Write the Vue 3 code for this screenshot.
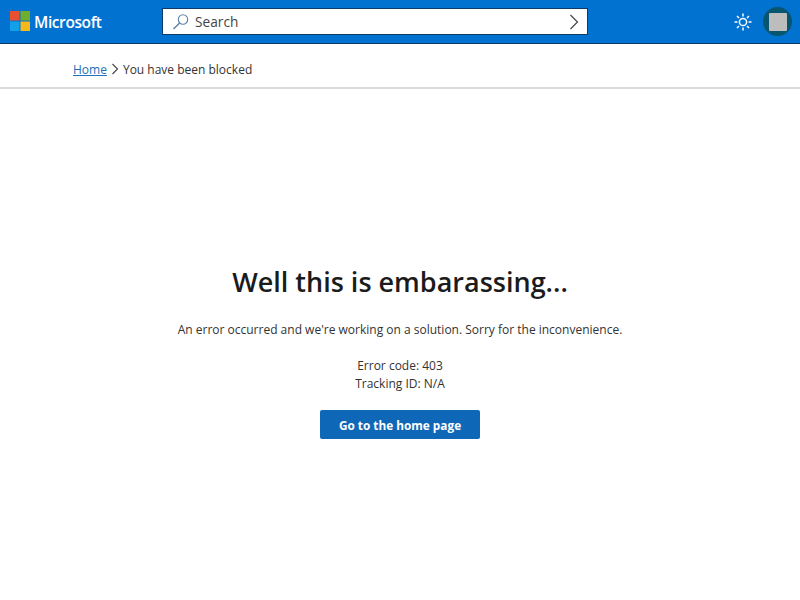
<script setup>
</script>

<template>
  <div class="page">
    <header class="topbar">
      <div class="brand">
        <svg class="logo" width="20" height="20" viewBox="0 0 20 20">
          <rect x="0" y="0" width="9.5" height="9.5" fill="#e8502f" />
          <rect x="10.5" y="0" width="9.5" height="9.5" fill="#6fae2c" />
          <rect x="0" y="10.5" width="9.5" height="9.5" fill="#12a0e8" />
          <rect x="10.5" y="10.5" width="9.5" height="9.5" fill="#f6b81a" />
        </svg>
        <span class="brand-name">Microsoft</span>
      </div>
      <div class="search">
        <svg class="search-icon" width="18" height="18" viewBox="0 0 18 18" fill="none" stroke="#5b7fa3" stroke-width="1.1">
          <circle cx="11" cy="6.5" r="4.7" />
          <path d="M7.6 9.9 L1.5 16" stroke-width="1.4" />
        </svg>
        <span class="search-text">Search</span>
        <svg class="go" width="12" height="16" viewBox="0 0 12 16" fill="none" stroke="#444" stroke-width="1.2">
          <path d="M2.5 1 L9.5 8 L2.5 15" />
        </svg>
      </div>
      <svg class="sun" width="18" height="18" viewBox="0 0 18 18" fill="none" stroke="#fff" stroke-width="1.5">
        <circle cx="9" cy="9" r="3.6" />
        <path d="M9 0.5V3.4M9 14.6V17.5M0.5 9H3.4M14.6 9H17.5M3 3L5 5M13 13L15 15M15 3L13 5M5 13L3 15" />
      </svg>
      <div class="avatar"><div class="avatar-img"></div></div>
    </header>
    <nav class="crumbs">
      <a class="home">Home</a>
      <svg class="sep" width="8" height="12" viewBox="0 0 8 12" fill="none" stroke="#444" stroke-width="1.1">
        <path d="M1.5 1 L6.5 6 L1.5 11" />
      </svg>
      <span>You have been blocked</span>
    </nav>
    <main class="content">
      <h1>Well this is embarassing...</h1>
      <p class="msg">An error occurred and we're working on a solution. Sorry for the inconvenience.</p>
      <p class="code">Error code: 403<br />Tracking ID: N/A</p>
      <button class="cta">Go to the home page</button>
    </main>
  </div>
</template>

<style>
html, body { margin: 0; background: #fff; }
</style>

<style scoped>
.page {
  width: 800px;
  height: 600px;
  overflow: hidden;
  font-family: "Open Sans", "Noto Sans", sans-serif;
  color: #2b2b2b;
}
.topbar {
  height: 43px;
  background: #0272d1;
  border-bottom: 1px solid #0d3a66;
  display: flex;
  align-items: center;
  padding-left: 10px;
  padding-right: 8px;
}
.brand { display: flex; align-items: center; width: 152px; }
.logo { flex: none; margin-top: -1px; }
.brand-name {
  margin-left: 4px;
  color: #fff;
  font-size: 15.5px;
  font-weight: 600;
  letter-spacing: -0.4px;
}
.search {
  width: 426px;
  height: 27px;
  box-sizing: border-box;
  background: #fff;
  border: 1px solid #0d3a66;
  display: flex;
  align-items: center;
  padding-left: 9px;
  padding-right: 7px;
}
.search-text { margin-left: 5px; font-size: 13.7px; color: #444; flex: 1; }
.sun { margin-left: auto; margin-right: 11px; }
.avatar {
  width: 29px;
  height: 29px;
  border-radius: 50%;
  background: #07566f;
  display: flex;
  align-items: center;
  justify-content: center;
}
.avatar-img { width: 18px; height: 18px; background: #bdbdbd; border-radius: 1px; }
.crumbs {
  height: 36px;
  padding-top: 7px;
  border-bottom: 2px solid #dcdcdc;
  display: flex;
  align-items: center;
  padding-left: 73px;
  font-size: 12px;
  color: #333;
}
.home { color: #2270b8; text-decoration: underline; }
.sep { margin: 0 4px 0 4px; }
.content {
  display: flex;
  flex-direction: column;
  align-items: center;
  text-align: center;
  padding-top: 173px;
}
h1 {
  margin: 0;
  font-size: 27px;
  line-height: 40px;
  font-weight: 600;
  color: #1b1b1b;
}
.msg { margin: 18px 0 0; font-size: 12px; line-height: 20px; color: #333; }
.code { margin: 17px 0 0; font-size: 12px; line-height: 18px; color: #333; }
.cta {
  margin-top: 17px;
  width: 160px;
  height: 29px;
  border: 0;
  border-radius: 2px;
  background: #0f67b8;
  color: #fff;
  font-family: inherit;
  font-size: 11.8px;
  font-weight: 700;
  padding: 1px 0 0;
}
</style>
